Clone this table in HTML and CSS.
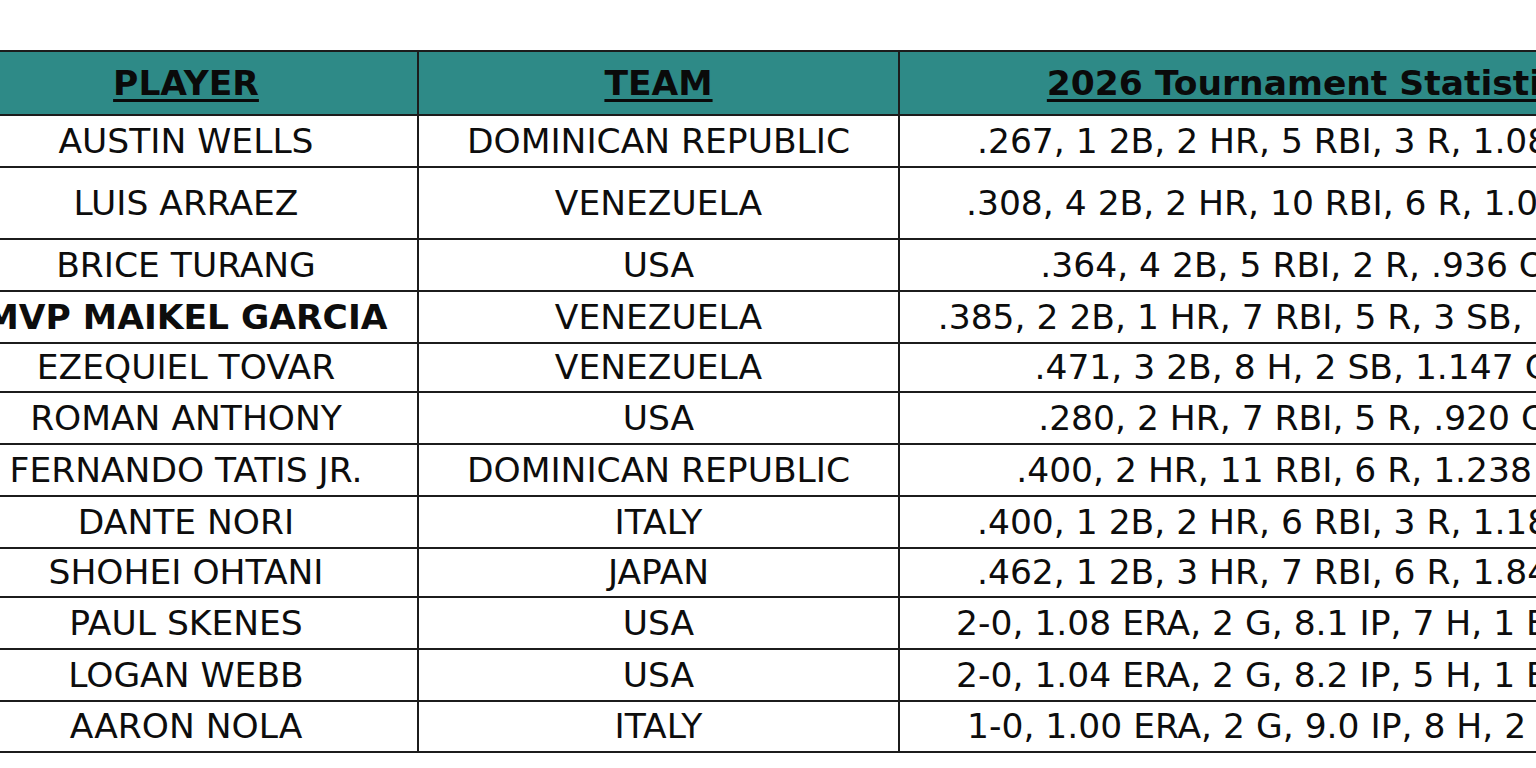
FILE: index.html
```html
<!DOCTYPE html>
<html lang="en">
<head>
<meta charset="utf-8">
<title>2026 Tournament Statistics</title>
<link rel="stylesheet" href="styles.css">
</head>
<body>
<div class="viewport">
  <table class="stats">
    <colgroup>
      <col class="c-player">
      <col class="c-team">
      <col class="c-stats">
    </colgroup>
    <thead>
      <tr class="head">
        <th>PLAYER</th>
        <th>TEAM</th>
        <th>2026 Tournament Statistics</th>
      </tr>
    </thead>
    <tbody>
      <tr class="r52"><td>AUSTIN WELLS</td><td>DOMINICAN REPUBLIC</td><td>.267, 1 2B, 2 HR, 5 RBI, 3 R, 1.084 OPS</td></tr>
      <tr class="r72"><td>LUIS ARRAEZ</td><td>VENEZUELA</td><td>.308, 4 2B, 2 HR, 10 RBI, 6 R, 1.077 OPS</td></tr>
      <tr class="r52"><td>BRICE TURANG</td><td>USA</td><td>.364, 4 2B, 5 RBI, 2 R, .936 OPS</td></tr>
      <tr class="r52"><td class="mvp">MVP MAIKEL GARCIA</td><td>VENEZUELA</td><td>.385, 2 2B, 1 HR, 7 RBI, 5 R, 3 SB, .995 OPS</td></tr>
      <tr class="r49"><td>EZEQUIEL TOVAR</td><td>VENEZUELA</td><td>.471, 3 2B, 8 H, 2 SB, 1.147 OPS</td></tr>
      <tr class="r52"><td>ROMAN ANTHONY</td><td>USA</td><td>.280, 2 HR, 7 RBI, 5 R, .920 OPS</td></tr>
      <tr class="r52"><td>FERNANDO TATIS JR.</td><td>DOMINICAN REPUBLIC</td><td>.400, 2 HR, 11 RBI, 6 R, 1.238 OPS</td></tr>
      <tr class="r52"><td>DANTE NORI</td><td>ITALY</td><td>.400, 1 2B, 2 HR, 6 RBI, 3 R, 1.180 OPS</td></tr>
      <tr class="r49"><td>SHOHEI OHTANI</td><td>JAPAN</td><td>.462, 1 2B, 3 HR, 7 RBI, 6 R, 1.842 OPS</td></tr>
      <tr class="r52"><td>PAUL SKENES</td><td>USA</td><td>2-0, 1.08 ERA, 2 G, 8.1 IP, 7 H, 1 BB, 10 K</td></tr>
      <tr class="r52"><td>LOGAN WEBB</td><td>USA</td><td>2-0, 1.04 ERA, 2 G, 8.2 IP, 5 H, 1 BB, 11 K</td></tr>
      <tr class="r51"><td>AARON NOLA</td><td>ITALY</td><td>1-0, 1.00 ERA, 2 G, 9.0 IP, 8 H, 2 BB, 9 K</td></tr>
    </tbody>
  </table>
</div>
</body>
</html>
```

FILE: styles.css
```css
html, body {
  margin: 0;
  padding: 0;
  background: #ffffff;
}

.viewport {
  width: 1536px;
  height: 768px;
  overflow: hidden;
  padding-top: 50px;
  box-sizing: border-box;
}

.stats {
  margin-left: -47px;
  border-collapse: collapse;
  table-layout: fixed;
  width: 1776px;
  font-family: "DejaVu Sans", Verdana, sans-serif;
  font-size: 34.5px;
  color: #0d0d0d;
}

.c-player { width: 464px; }
.c-team { width: 481px; }
.c-stats { width: 831px; }

.stats th,
.stats td {
  border: 2px solid #1c1c1c;
  padding: 0;
  text-align: center;
  vertical-align: middle;
  white-space: nowrap;
  overflow: hidden;
  line-height: 1;
}

.stats th {
  background: #2e8a87;
  font-weight: bold;
  text-decoration: underline;
  text-decoration-thickness: 3px;
  text-underline-offset: 4px;
  color: #0a0a0a;
}

.head { height: 64px; }
.r52 { height: 52px; }
.r51 { height: 51px; }
.r49 { height: 49px; }
.r72 { height: 72px; }

.stats td.mvp {
  font-weight: bold;
}
```
